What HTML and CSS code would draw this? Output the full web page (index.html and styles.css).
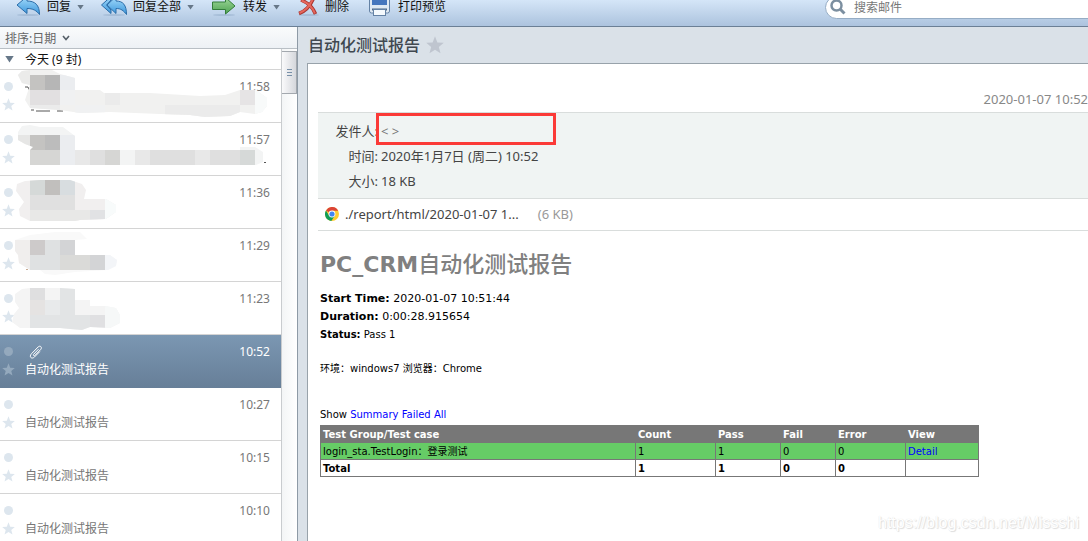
FILE: index.html
```html
<!DOCTYPE html>
<html lang="zh-CN">
<head>
    <meta charset="UTF-8">
    <meta name="viewport" content="width=device-width, initial-scale=1.0">
    <title>自动化测试报告</title>
    <link rel="stylesheet" href="styles.css">
</head>
<body>
    <svg class="defs" aria-hidden="true">
        <defs>
            <linearGradient id="blue" x1="0" y1="0" x2="0" y2="1">
                <stop offset="0" stop-color="#a5dcfb"/>
                <stop offset="1" stop-color="#3a96dc"/>
            </linearGradient>
            <linearGradient id="green" x1="0" y1="0" x2="0" y2="1">
                <stop offset="0" stop-color="#9ed79a"/>
                <stop offset="1" stop-color="#4ea352"/>
            </linearGradient>
            <symbol id="star" viewBox="0 0 16 16">
                <path d="M8 0.3 10.1 5.7 15.8 6 11.4 9.7 12.9 15.4 8 12.2 3.1 15.4 4.6 9.7 0.2 6 5.9 5.7z"/>
            </symbol>
        </defs>
    </svg>

    <header class="toolbar">
        <button class="tool">
            <svg width="26" height="22" viewBox="0 0 26 22">
                <ellipse cx="13" cy="19" rx="11" ry="1" fill="#8fa9c8" opacity=".5"/>
                <path d="M2 9 12 0.5V5C20 5 24.5 9 24.5 18.5 21.5 14.5 18 12.5 12 12.5V17.5z" fill="url(#blue)" stroke="#2a6ca8"/>
            </svg>
            <span>回复</span>
            <i class="caret"></i>
        </button>
        <button class="tool">
            <svg width="26" height="22" viewBox="0 0 26 22">
                <ellipse cx="13" cy="19" rx="11" ry="1" fill="#8fa9c8" opacity=".5"/>
                <path d="M0.5 9 10 0.5V4L5.5 9 10 14V17.5z" fill="url(#blue)" stroke="#2a6ca8"/>
                <path d="M6 9 15 0.5V5C22 5 25.5 9 25.5 18.5 22.5 14.5 20 12.5 15 12.5V17.5z" fill="url(#blue)" stroke="#2a6ca8"/>
            </svg>
            <span>回复全部</span>
            <i class="caret"></i>
        </button>
        <button class="tool">
            <svg width="26" height="22" viewBox="0 0 26 22">
                <ellipse cx="13" cy="19" rx="11" ry="1" fill="#8fa9c8" opacity=".5"/>
                <path d="M1.5 6H14.5V1.5L24 10 14.5 18V13.5H1.5z" fill="url(#green)" stroke="#337d3a"/>
            </svg>
            <span>转发</span>
            <i class="caret"></i>
        </button>
        <button class="tool">
            <svg width="22" height="22" viewBox="0 0 22 22">
                <ellipse cx="12" cy="19" rx="10" ry="1" fill="#8fa9c8" opacity=".5"/>
                <path d="M2 17.500C9 15 14 9 17 1" fill="none" stroke="#a8342f" stroke-width="3.500"/>
                <path d="M4 4C9 6 15 9 18.500 18" fill="none" stroke="#a8342f" stroke-width="3.500"/>
                <path d="M2.500 17C9 14.500 13.500 9 16.500 1.500M4.500 4.500C9 6 15 10 18 17.500" fill="none" stroke="#e5675d" stroke-width="2"/>
            </svg>
            <span>删除</span>
        </button>
        <button class="tool">
            <svg width="26" height="22" viewBox="0 0 26 22">
                <rect x="3.500" y="-3" width="20" height="20" rx="2" fill="#dfe9f3" stroke="#6482a5"/>
                <rect x="6" y="0" width="15" height="9" fill="#4576bd"/>
                <path d="M6 13.500H21" stroke="#4d6685" stroke-width="2"/>
                <rect x="7.500" y="13.500" width="12" height="6" fill="#f4f9fd" stroke="#6482a5"/>
            </svg>
            <span>打印预览</span>
        </button>
        <label class="search">
            <svg width="16" height="16" viewBox="0 0 16 16" fill="none" stroke="#7c8fa0">
                <circle cx="6.500" cy="6.500" r="5" stroke-width="2.500"/>
                <path d="M10.300 10.300 14.500 14.500" stroke-width="3"/>
            </svg>
            <input type="text" placeholder="搜索邮件" aria-label="搜索邮件">
        </label>
    </header>

    <main class="main">
        <section class="sidebar">
            <button class="sort">
                <span>排序:日期</span>
                <svg width="8" height="8" viewBox="0 0 8 8" fill="none" stroke="#555f68" stroke-width="1.600"><path d="M1 2 4 5.500 7 2"/></svg>
            </button>
            <div class="list-wrap">
                <div class="list">
                    <div class="group"><i class="caret group-caret"></i>今天 (9 封)</div>
                    <ul class="mails">
                        <li class="mail">
                            <i class="dot"></i><time>11:58</time>
                            <svg class="star"><use href="#star"/></svg><span></span>
                            <svg class="mask" viewBox="0 0 281 52">
                                <path d="M25 17h3l1 3h3M31 40h3M36 41h14M57 41h6M247 41h2" fill="none" stroke="#555"/>
                                <clipPath id="m1"><path d="M18 5 22 1 40-1 52 0 60 4 75 8V20H100L104 23H150L200 26 225 25 240 20H256L267 28 267 36 262 42 255 44 240 42 230 46 205 47 190 45 160 44 110 42 80 43 60 40 30 38 25 30 30 15 22 13z"/></clipPath>
                                <g clip-path="url(#m1)">
                                    <path fill="#f1f1f0" d="M0-2h281v54H0z"/>
                                    <path fill="#ebebea" d="M15 0h15v20H15z"/>
                                    <path fill="#c4c3c1" d="M30 5h15v15H30z"/>
                                    <path fill="#b6b6b6" d="M45 5h15v15H45z"/>
                                    <path fill="#ebedf0" d="M60 5h15v15H60z"/>
                                    <path fill="#e2e0e1" d="M30 20h30v15H30z"/>
                                    <path fill="#f0f1f2" d="M60 20h15v15H60zM75 35h30v15H75z"/>
                                    <path fill="#ebebeb" d="M105 20h15v15H105zM30 35h30v15H30zM165 35h75v15H165z"/>
                                    <path fill="#e6e4e5" d="M240 20h15v15H240z"/>
                                    <path fill="#f8fafa" d="M255 20h15v25H255z"/>
                                </g>
                            </svg>
                        </li>
                        <li class="mail">
                            <i class="dot"></i><time>11:57</time>
                            <svg class="star"><use href="#star"/></svg><span></span>
                            <svg class="mask" viewBox="0 0 281 52">
                                <path d="M82 41.500h2M264 39.500h2" fill="none" stroke="#555"/>
                                <clipPath id="m2"><path d="M18 9 22 3 30 2 40 4 63 4 75 13V27H240V24H255L263 29V39L256 42H30V27L33 24 25 21 18 17z"/></clipPath>
                                <g clip-path="url(#m2)">
                                    <path fill="#f3f4f4" d="M0 0h281v52H0z"/>
                                    <path fill="#e6e6e5" d="M15 12h15v15H15z"/>
                                    <path fill="#c4c3c1" d="M30 12h15v15H30z"/>
                                    <path fill="#bcbcbc" d="M45 12h15v15H45z"/>
                                    <path fill="#ebedf0" d="M60 12h15v30H60z"/>
                                    <path fill="#d6d6d4" d="M30 27h30v15H30zM105 27h15v15H105z"/>
                                    <path fill="#e8e8e8" d="M75 27h15v15H75zM135 27h15v15H135zM195 27h15v15H195z"/>
                                    <path fill="#dfdfdf" d="M90 27h15v15H90zM150 27h45v15H150zM210 27h30v15H210z"/>
                                    <path fill="#d6d9d8" d="M240 27h15v15H240z"/>
                                </g>
                            </svg>
                        </li>
                        <li class="mail">
                            <i class="dot"></i><time>11:36</time>
                            <svg class="star"><use href="#star"/></svg><span></span>
                            <svg class="mask" viewBox="0 0 281 52">
                                <clipPath id="m3"><path d="M16 15 17 8 25 5 40 4 70 4 82 8 86 14 84 23H106L116 29 116 36 106 43 80 44 75 45H30L20 40 19 33 24 26z"/></clipPath>
                                <g clip-path="url(#m3)">
                                    <path fill="#f1efef" d="M0 0h281v52H0z"/>
                                    <path fill="#d5d9d8" d="M30 4h15v15H30z"/>
                                    <path fill="#c1bfbd" d="M45 4h15v15H45z"/>
                                    <path fill="#d8dde0" d="M60 4h15v15H60z"/>
                                    <path fill="#e0e0e0" d="M30 19h45v15H30z"/>
                                    <path fill="#e8e8e7" d="M30 34h60v15H30z"/>
                                    <path fill="#e1e2e4" d="M90 34h15v11H90z"/>
                                    <path fill="#f8fbfb" d="M105 19h15v30H105z"/>
                                </g>
                            </svg>
                        </li>
                        <li class="mail">
                            <i class="dot"></i><time>11:29</time>
                            <svg class="star"><use href="#star"/></svg><span></span>
                            <svg class="mask" viewBox="0 0 281 52">
                                <path d="M26 40.500h2M34 40.500h2" fill="none" stroke="#c9ab92"/>
                                <clipPath id="m4"><path d="M15 11 30 6 55 3 80 3 87 10 75 11V26H110L117 31 116 37 108 41 75 43 55 46 45 45 40 41H30L19 34 18 26 15 22z"/></clipPath>
                                <g clip-path="url(#m4)">
                                    <path fill="#f9f9f9" d="M0 0h281v52H0z"/>
                                    <path fill="#f0eeed" d="M15 11h15v30H15z"/>
                                    <path fill="#cdcaca" d="M30 11h15v15H30z"/>
                                    <path fill="#dfe1e2" d="M45 11h15v15H45zM30 26h30v15H30z"/>
                                    <path fill="#d3d4d6" d="M60 11h15v15H60zM90 26h15v15H90z"/>
                                    <path fill="#dadad8" d="M60 26h30v15H60z"/>
                                    <path fill="#f3f5f8" d="M105 26h15v15H105z"/>
                                </g>
                            </svg>
                        </li>
                        <li class="mail">
                            <i class="dot"></i><time>11:23</time>
                            <svg class="star"><use href="#star"/></svg><span></span>
                            <svg class="mask" viewBox="0 0 281 52">
                                <clipPath id="m5"><path d="M15 12 22 7 30 6H60L75 7V18H90V24H105L116 26 120 33V41L110 46 90 45 82 48 70 47 60 46H20L12 40 14 32 19 26 15 20z"/></clipPath>
                                <g clip-path="url(#m5)">
                                    <path fill="#f4f4f4" d="M0 0h281v52H0z"/>
                                    <path fill="#dfdfe0" d="M30 6h15v12H30z"/>
                                    <path fill="#e2e4e5" d="M60 6h15v27H60zM30 33h60v15H30z"/>
                                    <path fill="#e5e3e2" d="M30 18h15v15H30z"/>
                                    <path fill="#e8eaeb" d="M45 18h15v15H45z"/>
                                    <path fill="#e0e0e2" d="M90 33h15v15H90z"/>
                                    <path fill="#f6f8f8" d="M105 24h15v24H105z"/>
                                </g>
                            </svg>
                        </li>
                        <li class="mail selected">
                            <i class="dot"></i>
                            <div class="mail-top">
                                <svg class="clip" width="14" height="14" viewBox="0 0 14 14" fill="none" stroke="#fff"><path d="M9.500 4.200 4.600 9.300C3.800 10.100 4.900 11.300 5.800 10.500L11.600 4.600C13.600 2.400 11.300 0 9.200 1.900L2.500 8.700C-0.400 11.900 2.700 14.500 5.400 12.100L10.800 6.600"/></svg>
                                <time>10:52</time>
                            </div>
                            <svg class="star"><use href="#star"/></svg><span>自动化测试报告</span>
                        </li>
                        <li class="mail">
                            <i class="dot"></i><time>10:27</time>
                            <svg class="star"><use href="#star"/></svg><span>自动化测试报告</span>
                        </li>
                        <li class="mail">
                            <i class="dot"></i><time>10:15</time>
                            <svg class="star"><use href="#star"/></svg><span>自动化测试报告</span>
                        </li>
                        <li class="mail">
                            <i class="dot"></i><time>10:10</time>
                            <svg class="star"><use href="#star"/></svg><span>自动化测试报告</span>
                        </li>
                    </ul>
                </div>
                <div class="scroll"><div class="thumb"><i></i></div></div>
            </div>
        </section>

        <section class="reader">
            <div class="subject">
                <h2>自动化测试报告</h2>
                <button class="fav" aria-label="星标"><svg width="18" height="18"><use href="#star"/></svg></button>
            </div>
            <article class="paper">
                <div class="date">2020-01-07 10:52</div>
                <dl class="meta">
                    <dt>发件人:</dt><dd class="from">&lt; &gt;</dd>
                    <dt>时间:</dt><dd>2020年1月7日 (周二) 10:52</dd>
                    <dt>大小:</dt><dd>18 KB</dd>
                </dl>
                <div class="attach">
                    <svg width="14" height="14" viewBox="0 0 14 14">
                        <circle cx="7" cy="7" r="7" fill="#fc3"/>
                        <path d="M7 7 1 3.400A7 7 0 0 1 13.200 3.700H7z" fill="#db4437"/>
                        <path d="M1 3.400A7 7 0 0 0 6.300 14L9.800 8.800 7 7 4 8.500z" fill="#0f9d58"/>
                        <circle cx="7" cy="7" r="3.400" fill="#fff"/>
                        <circle cx="7" cy="7" r="2.600" fill="#4285f4"/>
                    </svg>
                    <span>./report/html/2020-01-07 1...</span>
                    <span class="size">(6 KB)</span>
                </div>
                <div class="report">
                    <h1>PC_CRM<span>自动化测试报告</span></h1>
                    <p class="info"><b>Start Time:</b> 2020-01-07 10:51:44</p>
                    <p class="info"><b>Duration:</b> 0:00:28.915654</p>
                    <p><b>Status:</b> Pass 1</p>
                    <p class="env">环境：windows7 浏览器：Chrome</p>
                    <p class="show">Show <a href="#">Summary</a> <a href="#">Failed</a> <a href="#">All</a></p>
                    <table class="result">
                        <colgroup>
                            <col class="c-name"><col class="c-count"><col class="c-pass"><col class="c-fail"><col class="c-error"><col>
                        </colgroup>
                        <thead>
                            <tr><th>Test Group/Test case</th><th>Count</th><th>Pass</th><th>Fail</th><th>Error</th><th>View</th></tr>
                        </thead>
                        <tbody>
                            <tr class="pass"><td>login_sta.TestLogin：登录测试</td><td>1</td><td>1</td><td>0</td><td>0</td><td><a href="#">Detail</a></td></tr>
                        </tbody>
                        <tfoot>
                            <tr><td>Total</td><td>1</td><td>1</td><td>0</td><td>0</td><td></td></tr>
                        </tfoot>
                    </table>
                </div>
            </article>
        </section>
    </main>
    <div class="watermark">https://blog.csdn.net/Missshi</div>
</body>
</html>
```
FILE: styles.css
```css
*, *::after {
    box-sizing: border-box;
    margin: 0;
    padding: 0;
}
body {
    display: flex;
    flex-direction: column;
    position: relative;
    height: 100vh;
    overflow: hidden;
    font-family: "Noto Sans", "Noto Sans CJK SC", sans-serif;
    font-size: 12px;
    color: #333;
    background: #fff;
}
button, input {
    font: inherit;
    color: inherit;
    border: 0;
    background: none;
}
svg {
    display: block;
    flex: none;
}
.defs {
    position: absolute;
    width: 0;
    height: 0;
}

/* toolbar */
.toolbar {
    display: flex;
    align-items: center;
    gap: 17px;
    flex: none;
    height: 45px;
    margin-top: -18px;
    padding: 6px 0 0 15px;
    border-bottom: 1px solid #6b7f95;
    background: linear-gradient(#d5e6f8 40%, #acc3de);
}
.tool {
    display: flex;
    align-items: center;
    gap: 6px;
    white-space: nowrap;
    line-height: 12px;
    color: #111;
}
.caret {
    width: 7px;
    height: 5px;
    background: #667788;
    clip-path: polygon(0 0, 100% 0, 50% 100%);
}
.search {
    display: flex;
    align-items: center;
    gap: 8px;
    width: 279px;
    height: 23px;
    margin: 0 -16px 0 auto;
    padding-left: 4px;
    border: 1px solid #96adc5;
    border-radius: 12px;
    background: #fff;
}
.search input {
    flex: 1;
    min-width: 0;
    height: 12px;
    line-height: 12px;
    outline: none;
}
.search input::placeholder {
    color: #777;
}

.main {
    display: flex;
    flex: 1;
    min-height: 0;
}

/* mail list */
.sidebar {
    display: flex;
    flex-direction: column;
    width: 298px;
    flex: none;
    border-right: 1px solid #8e9aa6;
}
.sort {
    display: flex;
    align-items: center;
    gap: 6px;
    flex: none;
    height: 22px;
    padding-left: 5px;
    border-bottom: 1px solid #b9bfc5;
    background: linear-gradient(#fafbfc, #edf1f5);
    color: #666;
}
.list-wrap {
    display: flex;
    flex: 1;
    min-height: 0;
}
.list {
    flex: 1;
    overflow: hidden;
    border-right: 1px solid #c9cccf;
}
.group {
    display: flex;
    align-items: center;
    gap: 11px;
    height: 21px;
    padding-left: 5px;
    border-bottom: 1px solid #d4d4d4;
    color: #111;
}
.group-caret {
    width: 9px;
    height: 7px;
}
.mails {
    list-style: none;
}
.mail {
    display: grid;
    grid-template-columns: 13px 1fr;
    grid-template-rows: 17px 19px;
    column-gap: 10px;
    align-items: center;
    position: relative;
    height: 53px;
    padding: 8px 11px 0 2px;
    border-bottom: 1px solid #d4d4d4;
    color: #777;
    line-height: 19px;
}
.mail time {
    text-align: right;
}
.mail-top {
    display: flex;
    align-items: center;
    justify-content: space-between;
    padding-left: 4px;
}
.dot {
    width: 9px;
    height: 9px;
    margin: 0 auto;
    border-radius: 50%;
    background: #dde6ee;
}
.star {
    width: 13px;
    height: 13px;
    fill: #dde6ee;
}
.mask {
    position: absolute;
    left: 0;
    top: 0;
    width: 281px;
    height: 52px;
}
.selected {
    border-color: #677f98;
    background: linear-gradient(#7b97b2, #677f98);
    color: #fff;
}
.selected .dot {
    background: #94a9bd;
}
.selected .star {
    fill: #94a9bd;
}
.scroll {
    width: 15px;
    padding-top: 2px;
    background: linear-gradient(90deg, #f3f5f6, #fff);
}
.thumb {
    display: flex;
    align-items: center;
    justify-content: center;
    height: 43px;
    border: 1px solid #a3a8ae;
    border-left: 0;
    background: linear-gradient(90deg, #fafafb, #d5d7dc);
}
.thumb i {
    width: 5px;
    height: 7px;
    background: repeating-linear-gradient(#7890a8 0 1px, transparent 1px 3px);
}

/* reading pane */
.reader {
    display: flex;
    flex-direction: column;
    flex: 1;
    min-width: 0;
    padding-left: 9px;
    background: #dae1e8;
}
.subject {
    display: flex;
    align-items: center;
    gap: 6px;
    flex: none;
    height: 36px;
    padding-left: 1px;
}
.subject h2 {
    font-size: 16px;
    font-weight: 500;
    line-height: 24px;
    color: #404850;
}
.fav {
    fill: #bfc5cf;
}
.paper {
    flex: 1;
    padding-left: 10px;
    border: 1px solid #98a2aa;
    border-width: 1px 0 0 1px;
    background: #fff;
    font-size: 13px;
}
.date {
    height: 48px;
    padding-top: 24px;
    line-height: 22px;
    text-align: right;
    color: #888;
}
.meta {
    display: grid;
    grid-template-columns: 60px 1fr;
    grid-auto-rows: 25px;
    column-gap: 3px;
    position: relative;
    padding: 6px 0 4px;
    border: 1px solid #d9dddc;
    border-width: 1px 0;
    background: #f0f4f3;
    line-height: 25px;
    color: #444;
}
.meta dt {
    text-align: right;
}
.from {
    color: #777;
}
.from::after {
    content: "";
    position: absolute;
    left: 58px;
    top: 0;
    width: 180px;
    height: 32px;
    border: 3px solid #fb3a37;
}
.attach {
    display: flex;
    align-items: center;
    gap: 6px;
    height: 32px;
    padding: 0 0 1px 7px;
    border-bottom: 1px solid #d9dddc;
    color: #444;
}
.size {
    margin-left: 13px;
    color: #999;
}

/* report body */
.report {
    padding: 20px 0 0 2px;
    font-family: "DejaVu Sans", "Noto Sans CJK SC", sans-serif;
    font-size: 10px;
    line-height: 18px;
    color: #000;
}
.report h1 {
    margin-bottom: 11px;
    font-size: 22px;
    line-height: 28px;
    color: #808080;
}
.report h1 span {
    font-weight: 500;
}
.report a {
    color: #00f;
    text-decoration: none;
}
.info {
    font-size: 11px;
}
.env {
    margin-top: 16px;
}
.show {
    margin: 28px 0 1px;
}
.result {
    width: 100%;
    max-width: 659px;
    table-layout: fixed;
    border-collapse: collapse;
    line-height: 14px;
}
.result th, .result td {
    height: 17px;
    padding: 2px 2px 0;
    border: 1px solid #777;
    text-align: left;
}
.result th {
    background: #777;
    color: #fff;
}
.result tfoot {
    font-weight: bold;
}
.pass {
    background: #6c6;
}
.c-name {
    width: 315px;
}
.c-count {
    width: 80px;
}
.c-pass {
    width: 65px;
}
.c-fail {
    width: 55px;
}
.c-error {
    width: 70px;
}

.watermark {
    position: absolute;
    right: 9px;
    bottom: 9px;
    font-family: "Liberation Sans", sans-serif;
    font-size: 16px;
    line-height: 18px;
    color: #fff;
    text-shadow: 0 0 1px #ddd, 1px 1px 1px #ddd;
}
```
